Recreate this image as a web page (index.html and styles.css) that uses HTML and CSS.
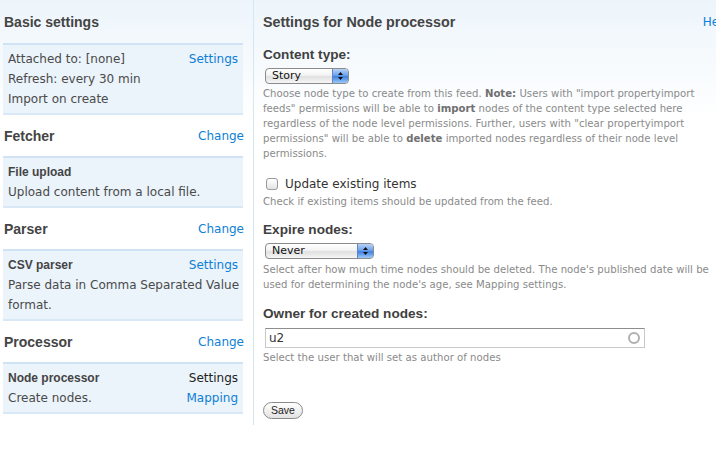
FILE: index.html
```html
<!DOCTYPE html>
<html>
<head>
<meta charset="utf-8">
<link rel="stylesheet" href="styles.css">
</head>
<body>
<div class="page">
  <div class="sidebar">
    <div class="sec-head first"><span>Basic settings</span></div>
    <div class="box">
      <div class="row"><span>Attached to: [none]</span><a href="#">Settings</a></div>
      <div class="row"><span>Refresh: every 30 min</span></div>
      <div class="row"><span>Import on create</span></div>
    </div>

    <div class="sec-head"><span>Fetcher</span><a href="#">Change</a></div>
    <div class="box">
      <div class="row"><b>File upload</b></div>
      <div class="row"><span>Upload content from a local file.</span></div>
    </div>

    <div class="sec-head"><span>Parser</span><a href="#">Change</a></div>
    <div class="box">
      <div class="row"><b>CSV parser</b><a href="#">Settings</a></div>
      <div class="row"><span>Parse data in Comma Separated Value</span></div>
      <div class="row"><span>format.</span></div>
    </div>

    <div class="sec-head"><span>Processor</span><a href="#">Change</a></div>
    <div class="box">
      <div class="row"><b>Node processor</b><span class="current">Settings</span></div>
      <div class="row"><span>Create nodes.</span><a href="#">Mapping</a></div>
    </div>
  </div>

  <div class="panel">
    <div class="panel-title"><span>Settings for Node processor</span><a href="#">Help</a></div>

    <div class="label">Content type:</div>
    <div class="select story"><span class="sel-text">Story</span><span class="arrows"><svg width="7" height="10" viewBox="0 0 7 10"><path d="M3.5 1 L6 4 L1 4 Z M3.5 9 L6 6 L1 6 Z" fill="#111"/></svg></span></div>
    <div class="desc first-desc">Choose node type to create from this feed. <b>Note:</b> Users with "import propertyimport<br>feeds" permissions will be able to <b>import</b> nodes of the content type selected here<br>regardless of the node level permissions. Further, users with "clear propertyimport<br>permissions" will be able to <b>delete</b> imported nodes regardless of their node level<br>permissions.</div>

    <div class="check-row"><span class="checkbox"></span><span>Update existing items</span></div>
    <div class="desc">Check if existing items should be updated from the feed.</div>

    <div class="label gap">Expire nodes:</div>
    <div class="select never"><span class="sel-text">Never</span><span class="arrows"><svg width="7" height="10" viewBox="0 0 7 10"><path d="M3.5 1 L6 4 L1 4 Z M3.5 9 L6 6 L1 6 Z" fill="#111"/></svg></span></div>
    <div class="desc">Select after how much time nodes should be deleted. The node's published date will be<br>used for determining the node's age, see Mapping settings.</div>

    <div class="label gap2">Owner for created nodes:</div>
    <div class="autocomplete"><span>u2</span><span class="throbber"></span></div>
    <div class="desc tight">Select the user that will set as author of nodes</div>

    <button class="btn" type="button">Save</button>
  </div>
</div>
</body>
</html>
```

FILE: styles.css
```css
html, body {
  margin: 0;
  padding: 0;
}

body {
  width: 716px;
  height: 449px;
  overflow: hidden;
  background: linear-gradient(#edf5fb 0, #ffffff 120px);
  font-family: "DejaVu Sans", sans-serif;
  color: #4a4a4a;
}

a {
  color: #0d7fd6;
  text-decoration: none;
}

.page {
  display: flex;
  align-items: flex-start;
  width: 780px;
}

.sidebar {
  flex: none;
  width: 240px;
  margin-left: 3px;
  margin-right: 10px;
}

.sec-head {
  height: 41px;
  display: flex;
  align-items: center;
  justify-content: space-between;
  padding-left: 1px;
  font: bold 14px "Liberation Sans", sans-serif;
  color: #444;
}

.sec-head.first {
  height: 43px;
}

.sec-head a {
  font: 12px "DejaVu Sans", sans-serif;
  margin-right: -1px;
}

.box {
  background: #ebf3fb;
  border-top: 2px solid #cfe3f4;
  border-bottom: 2px solid #d8e8f6;
  padding: 4px 5px;
  font-size: 12px;
  line-height: 20px;
}

.row {
  display: flex;
  justify-content: space-between;
  white-space: nowrap;
}

.row b {
  font: bold 12px "Liberation Sans", sans-serif;
  line-height: 20px;
  color: #444;
}

.current {
  color: #222;
}

.panel {
  flex: none;
  width: 467px;
  border-left: 1px solid #d6e6f3;
  padding: 0 0 6px 9px;
}

.panel-title {
  height: 44px;
  display: flex;
  align-items: center;
  justify-content: space-between;
  font: bold 14.3px "Liberation Sans", sans-serif;
  color: #444;
}

.panel-title a {
  font: 12px "DejaVu Sans", sans-serif;
}

.label {
  margin-top: 2px;
  font: bold 13.6px/18px "Liberation Sans", sans-serif;
  color: #404040;
}

.label.gap {
  margin-top: 12px;
}

.label.gap2 {
  margin-top: 13px;
}

.select {
  display: flex;
  height: 16px;
  margin: 4px 0 0 2px;
  border: 1px solid #8b8b8b;
  border-radius: 4px;
  box-sizing: border-box;
  overflow: hidden;
  background: linear-gradient(#ffffff, #f3f3f3 45%, #e0e0e0 55%, #f6f6f6);
  font-size: 11px;
}

.select.story {
  width: 84px;
}

.select.never {
  width: 109px;
}

.sel-text {
  flex: 1;
  padding-left: 6px;
  line-height: 14px;
  color: #111;
}

.arrows {
  width: 15px;
  display: flex;
  align-items: center;
  justify-content: center;
  border-left: 1px solid #5f86c2;
  background: linear-gradient(#b7d3f7, #6ea3ec 45%, #3f80e0 55%, #9ccaf7);
}

.desc {
  margin-top: 3px;
  font-size: 10.15px;
  letter-spacing: 0.02px;
  line-height: 15px;
  color: #8a8a8a;
  white-space: nowrap;
}

.desc b {
  color: #707070;
}

.desc.first-desc {
  margin-top: 2px;
}

.desc.tight {
  margin-top: 2px;
}

.check-row {
  margin-top: 13px;
  height: 20px;
  display: flex;
  align-items: center;
  font-size: 12px;
  color: #333;
}

.check-row + .desc {
  margin-top: 0;
}

.checkbox {
  width: 12px;
  height: 12px;
  margin-left: 3px;
  margin-right: 7px;
  border: 1px solid #9a9a9a;
  border-radius: 3px;
  box-sizing: border-box;
  background: linear-gradient(#ffffff, #e4e4e4);
}

.autocomplete {
  position: relative;
  width: 380px;
  height: 20px;
  margin: 5px 0 0 2px;
  border: 1px solid #c9c9c9;
  border-top-color: #8e8e8e;
  box-sizing: border-box;
  background: #fff;
  font-size: 12px;
  line-height: 18px;
  padding-left: 3px;
  color: #333;
}

.throbber {
  position: absolute;
  right: 4px;
  top: 3px;
  width: 12px;
  height: 12px;
  box-sizing: border-box;
  border: 2px solid #b0b0b0;
  border-radius: 50%;
}

.btn {
  display: block;
  margin-top: 37px;
  width: 40px;
  height: 17px;
  padding: 0;
  border: 1px solid #8a8a8a;
  border-radius: 9px;
  background: linear-gradient(#ffffff, #e2e2e2);
  font: 10.5px "Liberation Sans", sans-serif;
  color: #222;
  line-height: 15px;
}
```
